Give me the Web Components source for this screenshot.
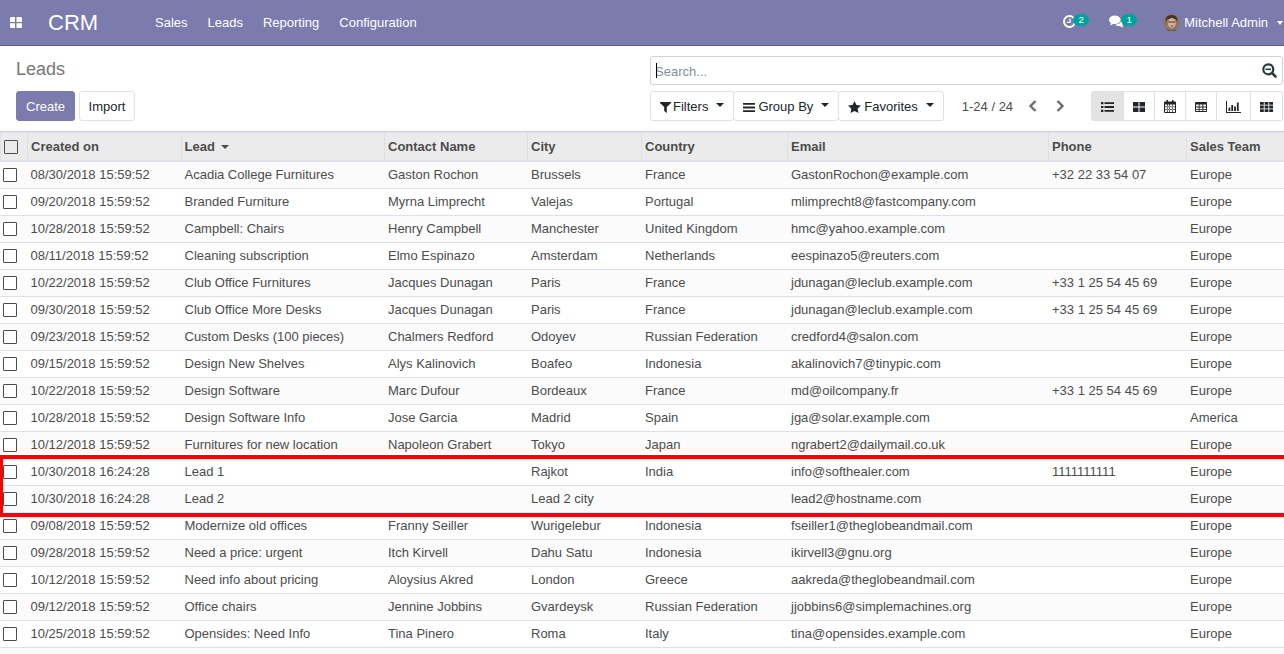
<!DOCTYPE html>
<html lang="en"><head><meta charset="utf-8"><title>CRM Leads</title>
<style>
html,body{margin:0;height:100%;overflow:hidden;background:#fff}
body{font:13px/18px "Liberation Sans",Arial,sans-serif;color:#4c4c4c;display:flex;flex-direction:column;height:654px}
</style></head><body>
<crm-navbar></crm-navbar>
<crm-control-panel></crm-control-panel>
<crm-lead-table></crm-lead-table>
<script>
const ICON={
 apps:'<svg width="12" height="11" viewBox="0 0 12 11"><path fill="currentColor" d="M0 1.2Q0 0 1.2 0H5V5H0zM6.500 0h4.300Q12 0 12 1.200V5H6.500zM0 6.200H5V11H1.200Q0 11 0 9.800zM6.500 6.200H12V9.800Q12 11 10.800 11H6.500z"/></svg>',
 filter:'<svg width="11" height="11" viewBox="0 0 11 11"><path fill="currentColor" d="M0 0H11V1L6.800 5V11L4.200 9V5L0 1z"/></svg>',
 bars:'<svg width="12" height="9" viewBox="0 0 12 9"><path fill="currentColor" d="M0 0H12V1.800H0zM0 3.600H12V5.400H0zM0 7.200H12V9H0z"/></svg>',
 star:'<svg width="13" height="12" viewBox="0 0 13 12"><path fill="currentColor" d="M6.500 0L8.400 4 13 4.600 9.600 7.700 10.500 12 6.500 9.900 2.500 12 3.400 7.700 0 4.600 4.600 4z"/></svg>',
 left:'<svg width="9" height="12" viewBox="0 0 9 12"><path fill="none" stroke="currentColor" stroke-width="2.400" d="M7.500 1L2.500 6l5 5"/></svg>',
 right:'<svg width="9" height="12" viewBox="0 0 9 12"><path fill="none" stroke="currentColor" stroke-width="2.400" d="M1.500 1l5 5-5 5"/></svg>',
 list:'<svg width="13" height="10" viewBox="0 0 13 10"><path fill="currentColor" d="M0 0H2.400V2.200H0zM3.500 .2H13V2H3.500zM0 3.900H2.400V6.100H0zM3.500 4.100H13V5.900H3.500zM0 7.800H2.400V10H0zM3.500 8H13V9.800H3.500z"/></svg>',
 kanban:'<svg width="12" height="10" viewBox="0 0 12 10"><path fill="currentColor" d="M0 0H5.500V4.500H0zM6.500 0H12V4.500H6.500zM0 5.500H5.500V10H0zM6.500 5.500H12V10H6.500z"/></svg>',
 cal:'<svg width="12" height="13" viewBox="0 0 12 13"><path fill="currentColor" fill-rule="evenodd" d="M1 1.500H2.500V0H4V1.500H8V0H9.500V1.500H11Q12 1.500 12 2.500V12Q12 13 11 13H1Q0 13 0 12V2.500Q0 1.500 1 1.500zM1 4.500V12H11V4.500zM3 4.500V12H3.700V4.500zM5.300 4.500V12H6V4.500zM8 4.500V12H8.700V4.500zM1 6.500V7.200H11V6.500zM1 9.200V9.900H11V9.200z"/></svg>',
 table:'<svg width="12" height="10" viewBox="0 0 12 10"><path fill="currentColor" fill-rule="evenodd" d="M1 0H11Q12 0 12 1V9Q12 10 11 10H1Q0 10 0 9V1Q0 0 1 0zM1 2.500V4.500H3.700V2.500zM4.600 2.500V4.500H7.400V2.500zM8.300 2.500V4.500H11V2.500zM1 5.400V7.200H3.700V5.400zM4.600 5.400V7.200H7.400V5.400zM8.300 5.400V7.200H11V5.400zM1 8V9H3.700V8zM4.600 8V9H7.400V8zM8.300 8V9H11V8z"/></svg>',
 chart:'<svg width="15" height="12" viewBox="0 0 15 12"><path fill="currentColor" d="M0 0H1V11H15V12H0zM2.500 6.500H4.300V10H2.500zM5.300 4H7.100V10H5.300zM8.100 5.500H9.900V10H8.100zM10.900 1.500H12.700V10H10.900z"/></svg>',
 grid:'<svg width="13" height="10" viewBox="0 0 13 10"><path fill="currentColor" d="M0 0H3.800V2.700H0zM4.600 0H8.400V2.700H4.600zM9.200 0H13V2.700H9.200zM0 3.600H3.800V6.400H0zM4.600 3.600H8.400V6.400H4.600zM9.200 3.600H13V6.400H9.200zM0 7.300H3.800V10H0zM4.600 7.300H8.400V10H4.600zM9.200 7.300H13V10H9.200z"/></svg>',
 search:'<svg width="15" height="15" viewBox="0 0 15 15"><circle cx="6.300" cy="6.300" r="5" fill="none" stroke="currentColor" stroke-width="2.200"/><path stroke="currentColor" stroke-width="1.600" d="M3.500 6.300H9"/><path stroke="currentColor" stroke-width="2.600" stroke-linecap="round" d="M10 10l3.500 3.500"/></svg>',
 clock:'<svg width="13" height="13" viewBox="0 0 13 13"><circle cx="6.500" cy="6.500" r="5.500" fill="none" stroke="currentColor" stroke-width="2"/><path fill="none" stroke="currentColor" stroke-width="1.300" d="M7 3.500V7.300H4"/></svg>',
 chat:'<svg width="15" height="13" viewBox="0 0 15 13"><ellipse cx="5.800" cy="4.700" rx="5.800" ry="4.300" fill="currentColor"/><path fill="currentColor" d="M2 6.500L1.500 10.500 6 8z"/><path fill="currentColor" d="M12.300 4.500Q15 5.500 14.800 8 14.500 9.500 13.300 10.200L14.200 12.800 10.500 11Q7.500 11.200 6 9.800 12 9.500 12.300 4.500z"/></svg>',
 avatar:'<svg width="17" height="17" viewBox="0 0 17 17"><circle cx="8.500" cy="8.500" r="8.500" fill="#8c7763"/><path fill="#40322c" d="M2.500 8Q2 1.200 8.500 1T14.500 8L12.800 5H4.500z"/><ellipse cx="8.800" cy="9" rx="4" ry="5" fill="#d6ae94"/><path stroke="#3a2f2a" stroke-width=".9" fill="none" d="M5 8H7.800M9.800 8H12.400M7.800 8H9.800"/><path fill="#8a5a48" d="M7 11.500H11L9 13z"/><path fill="#5c5048" d="M3 14.500Q8.500 18.500 14 14.500L12 17H5z"/></svg>'
};
const define=(name,css,html,init)=>customElements.define(name,class extends HTMLElement{
  constructor(){super();const r=this.attachShadow({mode:'open'});r.innerHTML=`<style>${css}</style>${html}`;if(init)init(r,this)}
});

define('crm-badge',`:host{display:inline-block;background:#00a09d;color:#fff;font-size:9.750px;line-height:12px;height:12px;min-width:16px;text-align:center;border-radius:6px}`,`<slot></slot>`);

define('crm-navbar',`
:host{display:flex;flex:none;align-items:center;height:45px;background:#7c7bad;border-bottom:1px solid #5e5d8f;color:#fff;font-size:13px}
.apps{display:flex;margin-left:10px;width:12px}
.brand{font-size:22px;line-height:45px;margin-left:26px;width:107px;color:#fff}
nav{display:flex;gap:20px}
nav span{line-height:45px;white-space:nowrap}
.sys{margin-left:auto;display:flex;align-items:center;height:45px}
.act{position:relative;display:flex;align-self:flex-start;margin-top:15px}
.act crm-badge{position:absolute;top:-1px;left:10px}
.user{display:flex;align-items:center;gap:4px;margin-left:39px;padding-right:1px}
.caret{display:inline-block;border-top:4px solid #fff;border-left:3.500px solid transparent;border-right:3.500px solid transparent;margin-left:5px}
svg{display:block}
`,`<div class="apps">${ICON.apps}</div><div class="brand">CRM</div>
<nav><span>Sales</span><span>Leads</span><span>Reporting</span><span>Configuration</span></nav>
<div class="sys">
 <div class="act" style="margin-right:33px">${ICON.clock}<crm-badge>2</crm-badge></div>
 <div class="act">${ICON.chat}<crm-badge style="left:12px">1</crm-badge></div>
 <div class="user">${ICON.avatar}<span>Mitchell Admin</span><i class="caret"></i></div>
</div>`);

define('crm-button',`
:host{display:inline-flex;align-items:center;box-sizing:border-box;height:30px;padding:2px 9px 0;border:1px solid #dee2e6;border-radius:3px;background:#fff;color:#212529;white-space:nowrap;font-size:13px}
:host([primary]){background:#7c7bad;border-color:#7c7bad;color:#fff}
:host([tool]){margin-right:-1px}
`,`<slot></slot>`);

define('crm-control-panel',`
:host{display:grid;flex:none;grid-template-columns:634px 1fr;height:86px;box-sizing:border-box;border-bottom:1px solid #ced4da;padding:10px 0 0 16px}
.title{font-size:18px;line-height:26px;color:#777;height:35px}
.search{display:flex;align-items:center;box-sizing:border-box;height:29px;border:1px solid #ced4da;border-radius:3px;width:633px;position:relative;padding-left:4px;color:#868e96}
.cursor{width:1px;height:15px;background:#000;position:absolute;left:5px;top:6px}
.search span{flex:1;padding-top:2px}
.search .mag{color:#2b3a3a;margin-right:5px}
.left{display:flex;flex-direction:column}
.btns{display:flex;gap:4px}
.right{display:flex;flex-direction:column;gap:6px}
.tools{display:flex;align-items:center;width:633px}
.gap{margin-left:3px}
.caret{display:inline-block;border-top:4px solid #212529;border-left:4px solid transparent;border-right:4px solid transparent;margin:-5px 0 0 8px}
.pager{margin-left:19px;padding-top:1px;color:#4c4c4c}
.nav{color:#6c6c6c;display:flex;margin-left:15px;gap:19px}
.views{margin-left:auto;display:flex;box-sizing:border-box;height:30px;border:1px solid #dee2e6;border-radius:3px}
.views span{display:flex;align-items:center;justify-content:center;box-sizing:border-box;border-left:1px solid #dee2e6;color:#212529;padding-top:1px}
.views span:first-child{border-left:0;background:#e3e3e3}
svg{display:block}
`,`<div class="left"><div class="title">Leads</div><div class="btns"><crm-button primary>Create</crm-button><crm-button style="padding-left:8.500px;padding-right:8.500px">Import</crm-button></div></div>
<div class="right">
 <div class="search"><div class="cursor"></div><span>Search...</span><div class="mag">${ICON.search}</div></div>
 <div class="tools">
  <crm-button tool>${ICON.filter}<span style="margin-left:2px">Filters</span><i class="caret"></i></crm-button>
  <crm-button tool>${ICON.bars}<span class="gap">Group By</span><i class="caret"></i></crm-button>
  <crm-button tool>${ICON.star}<span class="gap">Favorites</span><i class="caret"></i></crm-button>
  <div class="pager">1-24 / 24</div>
  <div class="nav">${ICON.left}${ICON.right}</div>
  <div class="views"><span style="width:31px">${ICON.list}</span><span style="width:31px">${ICON.kanban}</span><span style="width:31px">${ICON.cal}</span><span style="width:31px">${ICON.table}</span><span style="width:34px">${ICON.chart}</span><span style="width:32px">${ICON.grid}</span></div>
 </div>
</div>`);

const LEADS=`08/30/2018 15:59:52|Acadia College Furnitures|Gaston Rochon|Brussels|France|GastonRochon@example.com|+32 22 33 54 07|Europe
09/20/2018 15:59:52|Branded Furniture|Myrna Limprecht|Valejas|Portugal|mlimprecht8@fastcompany.com||Europe
10/28/2018 15:59:52|Campbell: Chairs|Henry Campbell|Manchester|United Kingdom|hmc@yahoo.example.com||Europe
08/11/2018 15:59:52|Cleaning subscription|Elmo Espinazo|Amsterdam|Netherlands|eespinazo5@reuters.com||Europe
10/22/2018 15:59:52|Club Office Furnitures|Jacques Dunagan|Paris|France|jdunagan@leclub.example.com|+33 1 25 54 45 69|Europe
09/30/2018 15:59:52|Club Office More Desks|Jacques Dunagan|Paris|France|jdunagan@leclub.example.com|+33 1 25 54 45 69|Europe
09/23/2018 15:59:52|Custom Desks (100 pieces)|Chalmers Redford|Odoyev|Russian Federation|credford4@salon.com||Europe
09/15/2018 15:59:52|Design New Shelves|Alys Kalinovich|Boafeo|Indonesia|akalinovich7@tinypic.com||Europe
10/22/2018 15:59:52|Design Software|Marc Dufour|Bordeaux|France|md@oilcompany.fr|+33 1 25 54 45 69|Europe
10/28/2018 15:59:52|Design Software Info|Jose Garcia|Madrid|Spain|jga@solar.example.com||America
10/12/2018 15:59:52|Furnitures for new location|Napoleon Grabert|Tokyo|Japan|ngrabert2@dailymail.co.uk||Europe
10/30/2018 16:24:28|Lead 1||Rajkot|India|info@softhealer.com|1111111111|Europe
10/30/2018 16:24:28|Lead 2||Lead 2 city||lead2@hostname.com||Europe
09/08/2018 15:59:52|Modernize old offices|Franny Seiller|Wurigelebur|Indonesia|fseiller1@theglobeandmail.com||Europe
09/28/2018 15:59:52|Need a price: urgent|Itch Kirvell|Dahu Satu|Indonesia|ikirvell3@gnu.org||Europe
10/12/2018 15:59:52|Need info about pricing|Aloysius Akred|London|Greece|aakreda@theglobeandmail.com||Europe
09/12/2018 15:59:52|Office chairs|Jennine Jobbins|Gvardeysk|Russian Federation|jjobbins6@simplemachines.org||Europe
10/25/2018 15:59:52|Opensides: Need Info|Tina Pinero|Roma|Italy|tina@opensides.example.com||Europe`.split('\n').map(l=>l.split('|'));
const HEAD=['Created on','Lead','Contact Name','City','Country','Email','Phone','Sales Team'];
const WIDTHS=[27,153.5,203.5,143,114,146,261,138,98];
const box='<span class="box"></span>';

define('crm-lead-table',`
:host{display:block;position:relative;flex:1;min-height:0;overflow:hidden}
table{border-collapse:separate;border-spacing:0;table-layout:fixed;width:1284px}
th{height:30px;box-sizing:border-box;background:#ebebeb;border-top:1px solid #dee2e6;border-bottom:2px solid #dee2e6;border-left:1px solid #dee2e6;text-align:left;font-weight:700;padding:0 3px;color:#4c4c4c;white-space:nowrap;overflow:hidden}
td{height:27px;box-sizing:border-box;border-bottom:1px solid #dee2e6;padding:0 3px 0 4px;white-space:nowrap;overflow:hidden;color:#4c4c4c}
td:nth-child(2){padding-left:3.500px}
td:first-child{padding:0 0 0 3px}
tbody tr:nth-child(odd) td{background:#fbfbfb}
.box{display:block;width:12px;height:12px;border:1px solid #4c4c4c;border-radius:1px;background:#fff}
th .box{background:transparent}
.sort{display:inline-block;border-top:4px solid #4c4c4c;border-left:4px solid transparent;border-right:4px solid transparent;margin-left:6px;vertical-align:2px}
.mark{position:absolute;left:0;right:-8px;top:323px;height:62px;box-sizing:border-box;border:4px solid #f00;border-left-width:3px;pointer-events:none}
`,`<table><colgroup>${WIDTHS.map(w=>`<col style="width:${w}px">`).join('')}</colgroup>
<thead><tr><th>${box}</th>${HEAD.map((h,i)=>`<th>${h}${i==1?'<i class="sort"></i>':''}</th>`).join('')}</tr></thead>
<tbody>${LEADS.map(r=>`<tr><td>${box}</td>${r.map(c=>`<td>${c}</td>`).join('')}</tr>`).join('')}<tr><td colspan="9"></td></tr></tbody></table><div class="mark"></div>`);
</script></body></html>
